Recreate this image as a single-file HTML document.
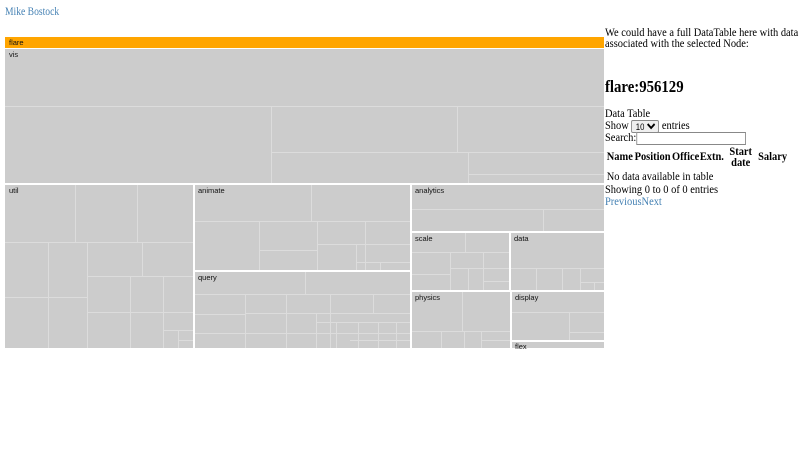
<!DOCTYPE html>
<html><head><meta charset="utf-8">
<style>
html,body{margin:0;padding:0;background:#fff;width:800px;height:450px;overflow:hidden}
body{font-family:"Liberation Serif",serif;font-size:12px;color:#000;position:relative}
a{color:#4682b4;text-decoration:none}
.top{position:absolute;left:5px;top:4px;font-size:12px;transform:scaleX(0.8);transform-origin:0 0;white-space:nowrap}
svg{position:absolute;left:0;top:0}
svg text{font-family:"Liberation Sans",sans-serif;font-size:7.5px;fill:#111}
.p{position:absolute;left:605px;top:0;width:230px;height:450px;transform:scaleX(0.87);transform-origin:0 0}
.l{position:absolute;left:0;white-space:nowrap;line-height:12px}
h2{font-size:17px;font-weight:bold;margin:0;position:absolute;top:77px;left:0;white-space:nowrap}
select{font-size:9px;height:13px;width:32px;padding:0;margin:0;border:1px solid #888;border-radius:2px;vertical-align:middle;font-family:"Liberation Sans",sans-serif}
input{width:124px;height:11px;border:1px solid #888;padding:0;margin:0;vertical-align:middle}
.th{position:absolute;top:146px;font-weight:bold;font-size:12px;line-height:11px;text-align:center;white-space:nowrap}
</style></head><body>
<div class="top"><a>Mike Bostock</a></div>
<svg width="800" height="450">
<rect x="5" y="37" width="599" height="11" fill="#ffa500"/>
<text x="9" y="45" fill="#000">flare</text>
<g fill="#ccc">
<rect x="5" y="49" width="599" height="134"/>
<rect x="5" y="185" width="188" height="163"/>
<rect x="195" y="185" width="215" height="85"/>
<rect x="195" y="272" width="215" height="76"/>
<rect x="412" y="185" width="192" height="46"/>
<rect x="412" y="233" width="97" height="57"/>
<rect x="511" y="233" width="93" height="57"/>
<rect x="412" y="292" width="98" height="56"/>
<rect x="512" y="292" width="92" height="48"/>
<rect x="512" y="342" width="92" height="6"/>
</g>
<g stroke="#dcdcdc" stroke-width="1" fill="none">
<path d="M5 106.5H604M271.5 106V183M457.5 106V152M271 152.5H604M468.5 152V183M468 174.5H604"/>
<path d="M5 242.5H193M75.5 185V242M137.5 185V242M48.5 242V348M87.5 242V348M5 297.5H87M87 276.5H193M142.5 242V276M130.5 276V348M163.5 276V348M87 312.5H193M163 330.5H193M178.5 330V348M178 340.5H193"/>
<path d="M311.5 185V221M195 221.5H410M259.5 221V270M317.5 221V270M365.5 221V270M259 250.5H317M317 244.5H410M356.5 244V270M356 262.5H410M380.5 262V270"/>
<path d="M305.5 272V294M195 294.5H410M245.5 294V348M195 314.5H245M245 313.5H410M286.5 294V348M195 333.5H410M330.5 294V348M373.5 294V313M316.5 313V348M316 322.5H410M336.5 322V348M358.5 322V348M378.5 322V348M396.5 322V348M350 340.5H410"/>
<path d="M412 209.5H604M543.5 209V231"/>
<path d="M465.5 233V252M412 252.5H509M450.5 252V290M483.5 252V290M412 274.5H450M450 268.5H509M468.5 268V290M483 281.5H509"/>
<path d="M511 268.5H604M536.5 268V290M562.5 268V290M580.5 268V290M580 282.5H604M594.5 282V290"/>
<path d="M462.5 292V331M412 331.5H510M441.5 331V348M464.5 331V348M481.5 331V348M481 340.5H510"/>
<path d="M569.5 312V340M512 312.5H604M569 332.5H604"/>
</g>
<g>
<text x="9" y="57">vis</text>
<text x="9" y="193">util</text>
<text x="198" y="193">animate</text>
<text x="198" y="280">query</text>
<text x="415" y="193">analytics</text>
<text x="415" y="241">scale</text>
<text x="514" y="241">data</text>
<text x="415" y="300">physics</text>
<text x="515" y="300">display</text>
<text x="515" y="349">flex</text>
</g>
</svg>
<div class="p">
<div class="l" style="top:26px">We could have a full DataTable here with data</div>
<div class="l" style="top:37px">associated with the selected Node:</div>
<h2>flare:956129</h2>
<div class="l" style="top:107px">Data Table</div>
<div class="l" style="top:119px">Show <select><option>10</option></select> entries</div>
<div class="l" style="top:131px">Search:<input></div>
<div class="th" style="left:2px;top:151px">Name</div>
<div class="th" style="left:34px;top:151px">Position</div>
<div class="th" style="left:77px;top:151px">Office</div>
<div class="th" style="left:109px;top:151px">Extn.</div>
<div class="th" style="left:143px">Start<br>date</div>
<div class="th" style="left:176px;top:151px">Salary</div>
<div class="l" style="left:2px;top:170px">No data available in table</div>
<div class="l" style="top:183px">Showing 0 to 0 of 0 entries</div>
<div class="l" style="top:195px"><a>Previous</a><a>Next</a></div>
</div>
</body></html>
